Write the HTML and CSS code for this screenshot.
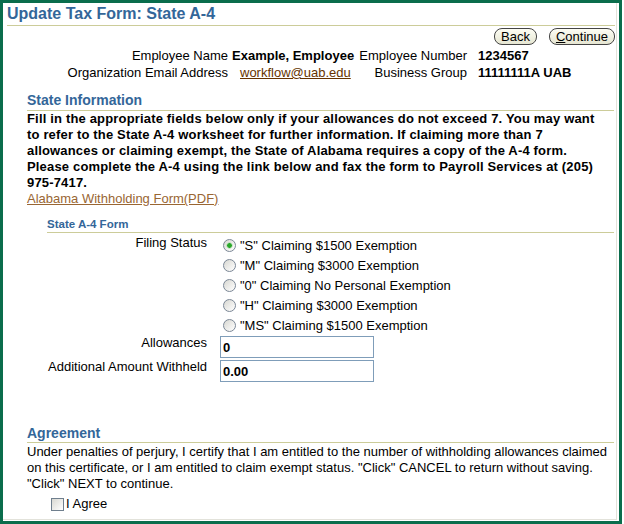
FILE: index.html
```html
<!DOCTYPE html>
<html lang="en">
<head>
  <meta charset="UTF-8">
  <title>Update Tax Form: State A-4</title>
  <link rel="stylesheet" href="styles.css">
</head>
<body>
  <div class="frame">
    <div class="page">
      <h1 class="page-title">Update Tax Form: State A-4</h1>

      <div class="actions">
        <button class="btn">Back</button>
        <button class="btn"><u>C</u>ontinue</button>
      </div>

      <div class="emp-info">
        <span class="lbl">Employee Name</span>
        <span class="val">Example, Employee</span>
        <span class="lbl">Employee Number</span>
        <span class="val num">1234567</span>

        <span class="lbl">Organization Email Address</span>
        <span class="val link-cell"><a href="#" class="link">workflow@uab.edu</a></span>
        <span class="lbl">Business Group</span>
        <span class="val num">11111111A UAB</span>
      </div>

      <h2 class="section">State Information</h2>
      <div class="section-body">
        <p class="instructions">Fill in the appropriate fields below only if your allowances do not exceed 7. You may want to refer to the State A-4 worksheet for further information. If claiming more than 7 allowances or claiming exempt, the State of Alabama requires a copy of the A-4 form. Please complete the A-4 using the link below and fax the form to Payroll Services at (205) 975-7417.</p>
        <a href="#" class="pdf-link">Alabama Withholding Form(PDF)</a>

        <h3 class="subsection">State A-4 Form</h3>
      </div>

      <div class="form-grid">
        <span class="flabel">Filing Status</span>
        <div class="radios">
          <label class="radio"><input type="radio" name="status" checked>"S" Claiming $1500 Exemption</label>
          <label class="radio"><input type="radio" name="status">"M" Claiming $3000 Exemption</label>
          <label class="radio"><input type="radio" name="status">"0" Claiming No Personal Exemption</label>
          <label class="radio"><input type="radio" name="status">"H" Claiming $3000 Exemption</label>
          <label class="radio"><input type="radio" name="status">"MS" Claiming $1500 Exemption</label>
        </div>

        <span class="flabel">Allowances</span>
        <input class="text-in" type="text" value="0">

        <span class="flabel">Additional Amount Withheld</span>
        <input class="text-in" type="text" value="0.00">
      </div>

      <h2 class="section agreement">Agreement</h2>
      <div class="section-body">
        <p class="terms">Under penalties of perjury, I certify that I am entitled to the number of withholding allowances claimed on this certificate, or I am entitled to claim exempt status. "Click" CANCEL to return without saving. "Click" NEXT to continue.</p>
        <label class="agree"><input type="checkbox">I Agree</label>
      </div>
    </div>
  </div>
</body>
</html>
```

FILE: styles.css
```css
html, body {
  margin: 0;
  padding: 0;
  background: #fff;
}
body {
  font-family: "Liberation Sans", Arial, sans-serif;
  font-size: 13px;
  color: #000;
}
.frame {
  box-sizing: border-box;
  width: 622px;
  height: 524px;
  border: 3px solid #0a6d4c;
  overflow: hidden;
}
.page {
  box-sizing: border-box;
  width: 614px;
  height: 517px;
  border-right: 1px solid #e2e2da;
  border-bottom: 1px solid #e2e2da;
  overflow: hidden;
}
.page-title {
  margin: 1px 1px 0 4px;
  padding-bottom: 2px;
  font-size: 16px;
  line-height: 19px;
  color: #336699;
  border-bottom: 1px solid #cccc99;
}
.actions {
  display: flex;
  justify-content: flex-end;
  gap: 12px;
  margin: 2px 1px 0 0;
}
.btn {
  font-family: inherit;
  font-size: 13px;
  line-height: 15px;
  height: 17px;
  padding: 0 6px;
  border: 1px solid #444;
  border-radius: 8px;
  background: linear-gradient(#fdfdf4, #e6e6d2);
  color: #000;
}
.emp-info {
  display: grid;
  grid-template-columns: 225px 131px 108px auto;
  margin-top: 2px;
  line-height: 17px;
}
.emp-info .lbl {
  text-align: right;
}
.emp-info .val {
  font-weight: bold;
  padding-left: 4px;
  white-space: nowrap;
}
.emp-info .link-cell {
  font-weight: normal;
  padding-left: 12px;
}
.emp-info .num {
  padding-left: 11px;
}
.link {
  color: #663300;
}
.section {
  margin: 11px 2px 0 24px;
  padding-bottom: 1px;
  font-size: 14px;
  line-height: 17px;
  color: #336699;
  border-bottom: 1px solid #cccc99;
}
.section-body {
  margin: 0 2px 0 24px;
  line-height: 16px;
}
.instructions {
  margin: 0;
  padding-right: 8px;
  font-weight: bold;
  letter-spacing: 0.17px;
}
.pdf-link {
  color: #996633;
}
.subsection {
  margin: 10px 0 0 20px;
  font-size: 11.5px;
  line-height: 15px;
  color: #336699;
  border-bottom: 1px solid #cccc99;
}
.form-grid {
  display: grid;
  grid-template-columns: 204px auto;
  column-gap: 13px;
  margin-top: 2px;
  align-items: start;
}
.flabel {
  text-align: right;
  line-height: 16px;
}
.radios {
  display: flex;
  flex-direction: column;
  padding-left: 3px;
}
.radio {
  display: flex;
  align-items: center;
  gap: 4px;
  height: 20px;
}
.radio input {
  appearance: none;
  box-sizing: border-box;
  margin: 0;
  width: 13px;
  height: 13px;
  border: 1px solid #7b8796;
  border-radius: 50%;
  background: linear-gradient(135deg, #d8d8d2, #fff);
}
.radio input:checked {
  background: radial-gradient(circle, #2aa62a 0 2px, #9fd89f 2.5px, transparent 3.5px), linear-gradient(135deg, #d8d8d2, #fff);
}
.text-in {
  box-sizing: border-box;
  width: 154px;
  height: 22px;
  margin: 1px 0;
  border: 1px solid #7f9db9;
  padding: 2px 2px;
  font-family: inherit;
  font-weight: bold;
  font-size: 13px;
}
.agreement {
  margin-top: 42px;
  padding-bottom: 0;
}
.terms {
  margin: 1px 0 0;
}
.agree {
  display: flex;
  align-items: center;
  gap: 2px;
  margin: 4px 0 0 24px;
}
.agree input {
  appearance: none;
  box-sizing: border-box;
  margin: 0;
  width: 13px;
  height: 13px;
  border: 1px solid #6f7f8e;
  background: linear-gradient(135deg, #d8d8d2, #fff);
}
```
